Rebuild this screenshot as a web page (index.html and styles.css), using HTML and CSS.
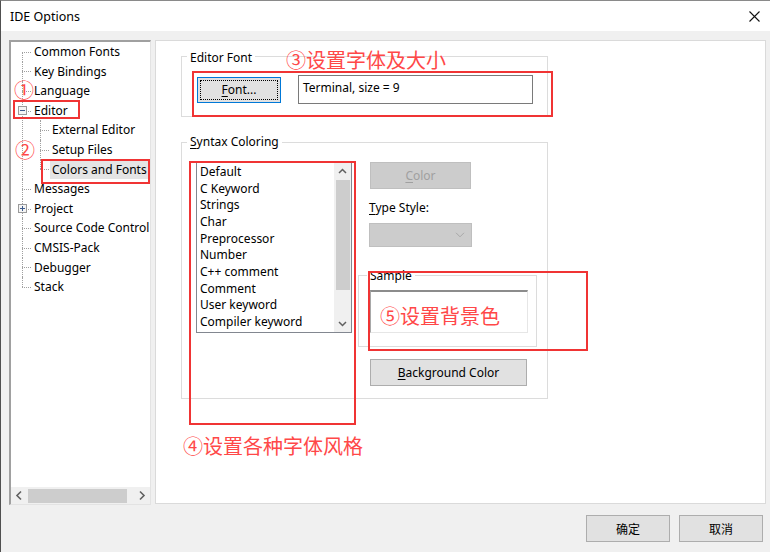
FILE: index.html
```html
<!DOCTYPE html>
<html>

<head>
    <link rel="stylesheet" href="styles.css">
</head>

<body>

    <div id="window">
        <div class="titlebar">
            <span class="title">IDE Options</span>
            <svg class="close" width="11" height="11" viewBox="0 0 11 11">
                <path d="M0.5 0.5 L10.5 10.5 M10.5 0.5 L0.5 10.5" stroke="#111" stroke-width="1.1" fill="none" />
            </svg>
        </div>

        <div class="body">
            <div class="main">
                <div class="tree">
                    <ul class="tree-list">
                        <li class="first"><span class="node">Common Fonts</span></li>
                        <li><span class="node">Key Bindings</span></li>
                        <li><span class="node">Language</span></li>
                        <li><span class="exp minus"></span><span class="node">Editor</span>
                            <ul>
                                <li><span class="node">External Editor</span></li>
                                <li><span class="node">Setup Files</span></li>
                                <li class="last"><span class="node sel">Colors and Fonts</span></li>
                            </ul>
                        </li>
                        <li><span class="node">Messages</span></li>
                        <li><span class="exp plus"></span><span class="node">Project</span></li>
                        <li><span class="node">Source Code Control</span></li>
                        <li><span class="node">CMSIS-Pack</span></li>
                        <li><span class="node">Debugger</span></li>
                        <li class="last"><span class="node">Stack</span></li>
                    </ul>
                    <div class="hscroll">
                        <svg class="arrow" width="17" height="17" viewBox="0 0 17 17">
                            <path d="M10 4.5 L6 8.5 L10 12.5" stroke="#606060" stroke-width="1.6" fill="none" />
                        </svg>
                        <div class="htrack"><div class="hthumb"></div></div>
                        <svg class="arrow" width="17" height="17" viewBox="0 0 17 17">
                            <path d="M7 4.5 L11 8.5 L7 12.5" stroke="#606060" stroke-width="1.6" fill="none" />
                        </svg>
                    </div>
                </div>

                <div class="page">
                    <div class="group font-group">
                        <span class="group-label">Editor Font</span>
                        <button class="btn focused"><span class="focus-rect"><u>F</u>ont...</span></button>
                        <div class="textbox">Terminal, size = 9</div>
                    </div>

                    <div class="group syntax-group">
                        <span class="group-label"><u>S</u>yntax Coloring</span>

                        <div class="listbox">
                            <div class="items">
                                <div>Default</div>
                                <div>C Keyword</div>
                                <div>Strings</div>
                                <div>Char</div>
                                <div>Preprocessor</div>
                                <div>Number</div>
                                <div>C++ comment</div>
                                <div>Comment</div>
                                <div>User keyword</div>
                                <div>Compiler keyword</div>
                            </div>
                            <div class="vscroll">
                                <svg width="17" height="17" viewBox="0 0 17 17">
                                    <path d="M5 10 L8.5 6.5 L12 10" stroke="#606060" stroke-width="1.5" fill="none" />
                                </svg>
                                <div class="vtrack"><div class="vthumb"></div></div>
                                <svg width="17" height="17" viewBox="0 0 17 17">
                                    <path d="M5 7 L8.5 10.5 L12 7" stroke="#606060" stroke-width="1.5" fill="none" />
                                </svg>
                            </div>
                        </div>

                        <div class="style-col">
                            <button class="btn disabled color-btn"><u>C</u>olor</button>
                            <div class="field-label"><u>T</u>ype Style:</div>
                            <div class="combo">
                                <svg width="10" height="6" viewBox="0 0 10 6">
                                    <path d="M1 0.8 L5 4.8 L9 0.8" stroke="#a8a8a8" stroke-width="1" fill="none" />
                                </svg>
                            </div>
                            <div class="group sample-group">
                                <span class="group-label">Sample</span>
                                <div class="sample-box"></div>
                            </div>
                            <button class="btn bg-btn"><u>B</u>ackground Color</button>
                        </div>
                    </div>
                </div>
            </div>

            <div class="footer">
                <button class="btn dlg-btn">确定</button>
                <button class="btn dlg-btn">取消</button>
            </div>
        </div>

        <!-- red annotations drawn over the screenshot -->
        <div class="mark mark-editor"></div>
        <div class="mark mark-colors"></div>
        <div class="mark mark-font"></div>
        <div class="mark mark-list"></div>
        <div class="mark mark-sample"></div>
        <span class="note note-1">①</span>
        <span class="note note-2">②</span>
        <span class="note note-3">③设置字体及大小</span>
        <span class="note note-4">④设置各种字体风格</span>
        <span class="note note-5">⑤设置背景色</span>
    </div>

</body>

</html>
```

FILE: styles.css
```css
body {
    margin: 0;
    font-family: "Noto Sans", "Noto Sans CJK SC", sans-serif;
    font-size: 12px;
    color: #000;
    background-color: #f0f0f0;
}

u {
    text-decoration-thickness: 1px;
    text-underline-offset: 2px;
}

#window {
    position: relative;
    width: 770px;
    height: 552px;
    box-sizing: border-box;
    border-top: 1px solid #8a8a8a;
    border-left: 1px solid #505050;
    background-color: #f0f0f0;
    display: flex;
    flex-direction: column;
    overflow: hidden;
}

.titlebar {
    height: 30px;
    background-color: #ffffff;
    display: flex;
    align-items: center;
    justify-content: space-between;
    padding: 0 8px 0 9px;
}

.title {
    font-size: 12.5px;
    margin-top: 1px;
}

.close {
    margin-right: 2px;
    margin-top: 1px;
}

.body {
    flex: 1;
    display: flex;
    flex-direction: column;
    padding-top: 9px;
}

.main {
    height: 465px;
    display: flex;
    padding-left: 8px;
}

/* tree */

.tree {
    width: 142px;
    box-sizing: border-box;
    background-color: #ffffff;
    border-left: 2px solid #a0a0a0;
    border-top: 2px solid #a0a0a0;
    border-right: 1px solid #e3e3e3;
    border-bottom: 1px solid #e3e3e3;
    display: flex;
    flex-direction: column;
    overflow: hidden;
}

.tree-list {
    flex: 1;
    margin: 0;
    padding: 0;
}

.tree-list ul {
    margin: 0 0 0 -3px;
    padding: 0;
}

.tree-list li {
    list-style: none;
    position: relative;
    padding-left: 21px;
}

.tree-list li::before {
    content: "";
    position: absolute;
    left: 11px;
    top: 9.8px;
    width: 9px;
    border-top: 1px dotted #a0a0a0;
}

.tree-list li::after {
    content: "";
    position: absolute;
    left: 11px;
    top: 0;
    bottom: 0;
    border-left: 1px dotted #a0a0a0;
}

.tree-list li.first::after {
    top: 9.8px;
}

.tree-list li.last::after {
    bottom: auto;
    height: 9.8px;
}

.node {
    display: block;
    height: 19.6px;
    line-height: 19.6px;
    padding: 0 2px;
    white-space: nowrap;
}

.node.sel {
    background-color: #e4e4e4;
}

.exp {
    position: absolute;
    z-index: 1;
    left: 7px;
    top: 5.3px;
    width: 7px;
    height: 7px;
    border: 1px solid #9a9a9a;
    background-color: #f4f4f4;
}

.exp::before {
    content: "";
    position: absolute;
    left: 1px;
    top: 3px;
    width: 5px;
    border-top: 1px solid #3c5a8c;
}

.exp.plus::after {
    content: "";
    position: absolute;
    left: 3px;
    top: 1px;
    height: 5px;
    border-left: 1px solid #3c5a8c;
}

.hscroll {
    height: 17px;
    display: flex;
    align-items: center;
    background-color: #f0f0f0;
}

.htrack {
    flex: 1;
    height: 17px;
    display: flex;
    align-items: center;
}

.hthumb {
    width: 99px;
    height: 14px;
    background-color: #cdcdcd;
}

/* page */

.page {
    flex: 1;
    margin: 0 4px 1px 4px;
    background-color: #ffffff;
    border: 1px solid #dadada;
    padding-left: 25px;
}

.group {
    position: relative;
    box-sizing: border-box;
    border: 1px solid #dcdcdc;
}

.group-label {
    position: absolute;
    top: -9px;
    left: 5px;
    padding: 0 3px;
    line-height: 16px;
    background-color: #ffffff;
    white-space: nowrap;
}

.font-group {
    width: 367px;
    margin-top: 15px;
    display: flex;
    align-items: center;
    padding: 18px 0 12px 15px;
}

.font-group .group-label {
    top: -7px;
}

.btn {
    font-family: "Noto Sans", "Noto Sans CJK SC", sans-serif;
    font-size: 12px;
    color: #000;
    background-color: #e1e1e1;
    border: 1px solid #adadad;
    padding: 0;
    box-sizing: border-box;
}

.btn.focused {
    width: 84px;
    height: 26px;
    border-color: #0078d7;
    padding: 2px;
}

.focus-rect {
    display: flex;
    align-items: center;
    justify-content: center;
    height: 100%;
    border: 1px dotted #000;
    box-sizing: border-box;
}

.textbox {
    width: 235px;
    height: 29px;
    box-sizing: border-box;
    margin-left: 17px;
    border: 1px solid #7a7a7a;
    padding: 3px 0 0 4px;
    line-height: 18px;
}

.syntax-group {
    width: 367px;
    height: 257px;
    margin-top: 25px;
    display: flex;
    align-items: flex-start;
    padding: 19px 0 0 14px;
}

.listbox {
    width: 156px;
    height: 171px;
    box-sizing: border-box;
    border: 1px solid #828790;
    display: flex;
}

.items {
    flex: 1;
    padding: 1px 0 0 3px;
    overflow: hidden;
}

.items div {
    height: 16.67px;
    line-height: 16.67px;
    white-space: nowrap;
}

.vscroll {
    width: 17px;
    background-color: #f0f0f0;
    display: flex;
    flex-direction: column;
}

.vtrack {
    flex: 1;
    display: flex;
    justify-content: center;
}

.vthumb {
    width: 14px;
    height: 110px;
    background-color: #cdcdcd;
}

.style-col {
    width: 179px;
    margin-left: 6px;
    display: flex;
    flex-direction: column;
    align-items: flex-start;
}

.btn.disabled {
    background-color: #cccccc;
    border-color: #bfbfbf;
    color: #a0a0a0;
}

.color-btn {
    width: 101px;
    height: 27px;
    margin-left: 12px;
}

.field-label {
    margin: 11px 0 0 11px;
    line-height: 16px;
}

.combo {
    width: 103px;
    height: 24px;
    box-sizing: border-box;
    margin: 7px 0 0 11px;
    background-color: #cccccc;
    border: 1px solid #bfbfbf;
    display: flex;
    align-items: center;
    justify-content: flex-end;
    padding-right: 6px;
}

.sample-group {
    width: 179px;
    height: 72px;
    margin-top: 28px;
    padding: 14px 0 0 11px;
}

.sample-group .group-label {
    left: 8px;
    top: -8px;
}

.sample-box {
    width: 158px;
    height: 43px;
    box-sizing: border-box;
    border-top: 2px solid #8c8c8c;
    border-left: 1px solid #a8a8a8;
    border-right: 1px solid #e6e6e6;
    border-bottom: 1px solid #e6e6e6;
}

.bg-btn {
    width: 157px;
    height: 27px;
    margin: 12px 0 0 12px;
}

/* footer */

.footer {
    flex: 1;
    display: flex;
    justify-content: flex-end;
    align-items: flex-start;
    gap: 9px;
    padding: 10px 7px 0 0;
}

.dlg-btn {
    width: 84px;
    height: 27px;
    font-family: "Noto Sans CJK SC", sans-serif;
}

/* annotations */

.mark {
    position: absolute;
    border: 2px solid #f03434;
    box-sizing: border-box;
}

.mark-editor {
    left: 12px;
    top: 99px;
    width: 67px;
    height: 19px;
}

.mark-colors {
    left: 40px;
    top: 158px;
    width: 109px;
    height: 25px;
}

.mark-font {
    left: 191px;
    top: 70px;
    width: 361px;
    height: 46px;
}

.mark-list {
    left: 188px;
    top: 160px;
    width: 167px;
    height: 264px;
}

.mark-sample {
    left: 367px;
    top: 270px;
    width: 220px;
    height: 80px;
}

.note {
    position: absolute;
    font-family: "Noto Sans CJK SC", sans-serif;
    font-size: 20px;
    line-height: 24px;
    color: #ff4848;
    white-space: nowrap;
}

.note-1 {
    left: 13px;
    top: 77px;
}

.note-2 {
    left: 14px;
    top: 137px;
}

.note-3 {
    left: 285px;
    top: 47px;
}

.note-4 {
    left: 182px;
    top: 433px;
}

.note-5 {
    left: 379px;
    top: 303px;
}
```
